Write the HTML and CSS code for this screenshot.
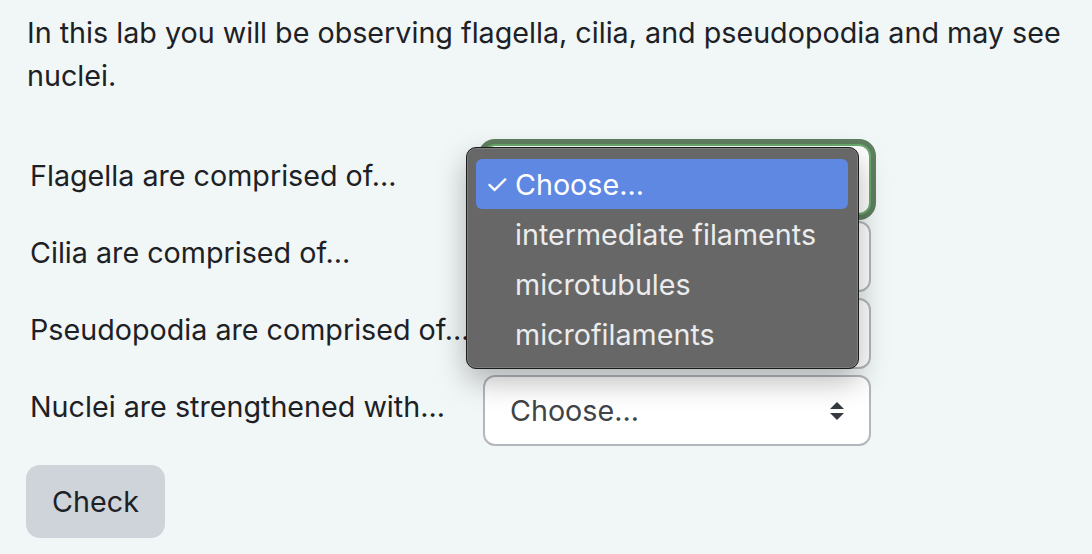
FILE: index.html
```html
<!DOCTYPE html>
<html lang="en">
<head>
    <meta charset="UTF-8">
    <title>Lab quiz</title>
    <link rel="stylesheet" href="styles.css">
</head>
<body>
    <div class="content">
        <p class="intro">In this lab you will be observing flagella, cilia, and pseudopodia and may see nuclei.</p>

        <div class="questions">
            <div class="row">
                <label class="q-label">Flagella are comprised of...</label>
                <div class="select-wrap">
                    <div class="fake-select focused"></div>
                    <!-- menu natif ouvert -->
                    <div class="popup">
                        <div class="popup-item selected"><span class="tick">✓</span>Choose...</div>
                        <div class="popup-item">intermediate filaments</div>
                        <div class="popup-item">microtubules</div>
                        <div class="popup-item">microfilaments</div>
                    </div>
                </div>
            </div>
            <div class="row">
                <label class="q-label">Cilia are comprised of...</label>
                <div class="select-wrap">
                    <div class="fake-select"></div>
                </div>
            </div>
            <div class="row">
                <label class="q-label">Pseudopodia are comprised of...</label>
                <div class="select-wrap">
                    <div class="fake-select"></div>
                </div>
            </div>
            <div class="row">
                <label class="q-label">Nuclei are strengthened with...</label>
                <div class="select-wrap">
                    <div class="fake-select">
                        <span class="select-text">Choose...</span>
                        <svg class="arrows" width="16" height="20" viewBox="0 0 16 20">
                            <path d="M8 1 L15 8 L1 8 Z" fill="#343a40"/>
                            <path d="M1 12 L15 12 L8 19 Z" fill="#343a40"/>
                        </svg>
                    </div>
                </div>
            </div>
        </div>

        <button class="check-btn">Check</button>
    </div>
</body>
</html>
```

FILE: styles.css
```css
body {
    margin: 0;
    background-color: #f1f6f6;
    font-family: Inter, "Noto Sans", sans-serif;
    color: #1d2125;
    font-size: 28.7px;
}
.content {
    padding: 11px 27px;
}
.intro {
    margin: 0 0 47px 0;
    line-height: 43px;
}
.questions {
    display: flex;
    flex-direction: column;
    gap: 6px;
}
.row {
    display: flex;
    align-items: center;
}
.q-label {
    width: 456px;
    padding-left: 3px;
    padding-bottom: 8px;
    box-sizing: border-box;
    white-space: nowrap;
}
.select-wrap {
    position: relative;
    width: 388px;
    height: 71px;
}
.fake-select {
    height: 100%;
    box-sizing: border-box;
    border: 2px solid #b2b7bd;
    border-radius: 12px;
    background-color: #fff;
    display: flex;
    align-items: center;
    justify-content: space-between;
    padding: 0 24px 0 25px;
}
.fake-select.focused {
    border-color: #6aab6c;
    box-shadow: 0 0 0 5px #5f7f60;
}
.select-text {
    color: #3f4449;
}
.arrows {
    display: block;
}
.popup {
    position: absolute;
    left: -17px;
    top: 3px;
    width: 393px;
    height: 222px;
    box-sizing: border-box;
    background-color: #666766;
    border: 1px solid #1b1b1b;
    border-radius: 10px;
    box-shadow: inset 0 0 0 1px #7d7e7d, 0 12px 30px rgba(0,0,0,0.28);
    padding: 11px 10px 0 9px;
    z-index: 5;
}
.popup-item {
    height: 50px;
    line-height: 52px;
    padding-left: 39px;
    color: #ececec;
    position: relative;
}
.popup-item.selected {
    background-color: #5f88e3;
    border-radius: 6px;
    color: #fff;
}
.tick {
    position: absolute;
    left: 9px;
    font-size: 27px;
}
.check-btn {
    margin-top: 19px;
    margin-left: -1px;
    width: 139px;
    height: 73px;
    border: none;
    border-radius: 14px;
    background-color: #ced4da;
    color: #1d2125;
    font-family: Inter, "Noto Sans", sans-serif;
    font-size: 28.7px;
    cursor: pointer;
}
```
